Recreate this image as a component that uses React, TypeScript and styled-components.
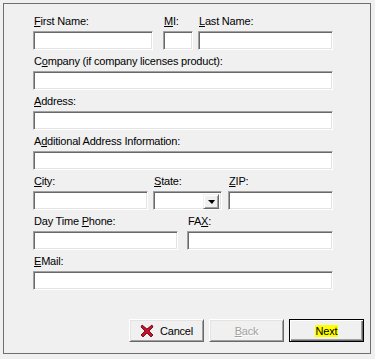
import styled, { createGlobalStyle } from "styled-components";

const GlobalStyle = createGlobalStyle`
  html, body {
    margin: 0;
    padding: 0;
    background: #f0f0f0;
  }
  body {
    font-family: "Liberation Sans", Arial, sans-serif;
    font-size: 11px;
    color: #000;
  }
`;

const Frame = styled.div`
  box-sizing: border-box;
  margin: 3px;
  width: 368px;
  height: 351px;
  border: 1px solid #6f6f6f;
  display: flex;
  flex-direction: column;
`;

const Form = styled.div`
  display: flex;
  flex-direction: column;
  gap: 4px;
  width: 300px;
  padding: 10px 0 0 29px;
`;

const Row = styled.div`
  display: flex;
  align-items: flex-start;
`;

const Field = styled.div<{ $w?: number; $ml?: number }>`
  display: flex;
  flex-direction: column;
  width: ${(p) => (p.$w ? `${p.$w}px` : "100%")};
  margin-left: ${(p) => p.$ml ?? 0}px;
`;

const Label = styled.label`
  display: block;
  height: 14px;
  line-height: 14px;
  margin-bottom: 3px;
  padding-left: 1px;
  white-space: nowrap;
  letter-spacing: -0.2px;
`;

const U = styled.span`
  text-decoration: underline;
  text-underline-offset: 1px;
`;

const sunken = `
  box-sizing: border-box;
  height: 19px;
  background: #fff;
  border: 1px solid;
  border-color: #a0a0a0 #fff #fff #a0a0a0;
  box-shadow: inset 1px 1px #696969, inset -1px -1px #e3e3e3;
`;

const Input = styled.input`
  ${sunken}
  width: 100%;
  margin: 0;
  padding: 0 3px;
  font: inherit;
  outline: none;
`;

const Combo = styled.div`
  ${sunken}
  width: 100%;
  display: flex;
  justify-content: flex-end;
  padding: 2px;
`;

const DropButton = styled.div`
  box-sizing: border-box;
  width: 16px;
  height: 15px;
  background: #f0f0f0;
  border: 1px solid;
  border-color: #f0f0f0 #696969 #696969 #f0f0f0;
  box-shadow: inset 1px 1px #fff, inset -1px -1px #a0a0a0;
  display: flex;
  align-items: center;
  justify-content: center;
`;

const Arrow = styled.div`
  width: 0;
  height: 0;
  border-left: 4px solid transparent;
  border-right: 3px solid transparent;
  border-top: 4px solid #000;
  margin-top: 1px;
`;

const Buttons = styled.div`
  margin-top: auto;
  display: flex;
  justify-content: flex-end;
  gap: 5px;
  padding: 0 6px 11px 0;
`;

const Button = styled.button<{ $default?: boolean }>`
  box-sizing: border-box;
  width: 75px;
  height: 23px;
  margin: 0;
  padding: 0;
  font: inherit;
  font-family: "Liberation Sans", Arial, sans-serif;
  font-size: 11px;
  letter-spacing: -0.2px;
  color: #000;
  background: #f0f0f0;
  display: flex;
  align-items: center;
  justify-content: center;
  gap: 6px;
  border: 1px solid;
  border-color: ${(p) => (p.$default ? "#000" : "#fff #696969 #696969 #fff")};
  box-shadow: ${(p) =>
    p.$default
      ? "inset 1px 1px #fff, inset -1px -1px #696969, inset -2px -2px #a0a0a0"
      : "inset 1px 1px #e3e3e3, inset -1px -1px #a0a0a0"};

  &:disabled {
    color: #a0a0a0;
    text-shadow: 1px 1px #fff;
  }
`;

const Highlight = styled.span`
  background: #ffff00;
  padding: 0 1px;
`;

function CancelIcon() {
  return (
    <svg width="14" height="14" viewBox="0 0 14 14">
      <path
        d="M2 1 L7 5 L12 1 L13 3 L9 7 L13 11 L11 13 L7 9 L3 13 L1 11 L5 7 L1 3 Z"
        fill="#c8102e"
        stroke="#5a0000"
        strokeWidth="0.8"
        strokeLinejoin="round"
      />
    </svg>
  );
}

export default function App() {
  return (
    <>
      <GlobalStyle />
      <Frame>
        <Form>
          <Row>
            <Field $w={120}>
              <Label><U>F</U>irst Name:</Label>
              <Input />
            </Field>
            <Field $w={30} $ml={10}>
              <Label><U>M</U>I:</Label>
              <Input />
            </Field>
            <Field $w={135} $ml={5}>
              <Label><U>L</U>ast Name:</Label>
              <Input />
            </Field>
          </Row>
          <Field>
            <Label>C<U>o</U>mpany (if company licenses product):</Label>
            <Input />
          </Field>
          <Field>
            <Label><U>A</U>ddress:</Label>
            <Input />
          </Field>
          <Field>
            <Label>A<U>d</U>ditional Address Information:</Label>
            <Input />
          </Field>
          <Row>
            <Field $w={115}>
              <Label><U>C</U>ity:</Label>
              <Input />
            </Field>
            <Field $w={69} $ml={5}>
              <Label><U>S</U>tate:</Label>
              <Combo>
                <DropButton>
                  <Arrow />
                </DropButton>
              </Combo>
            </Field>
            <Field $w={105} $ml={6}>
              <Label><U>Z</U>IP:</Label>
              <Input />
            </Field>
          </Row>
          <Row>
            <Field $w={145}>
              <Label>Day Time <U>P</U>hone:</Label>
              <Input />
            </Field>
            <Field $w={146} $ml={9}>
              <Label>FA<U>X</U>:</Label>
              <Input />
            </Field>
          </Row>
          <Field>
            <Label><U>E</U>Mail:</Label>
            <Input />
          </Field>
        </Form>
        <Buttons>
          <Button>
            <CancelIcon />
            Cancel
          </Button>
          <Button disabled>
            <span><U>B</U>ack</span>
          </Button>
          <Button $default>
            <Highlight>Next</Highlight>
          </Button>
        </Buttons>
      </Frame>
    </>
  );
}
